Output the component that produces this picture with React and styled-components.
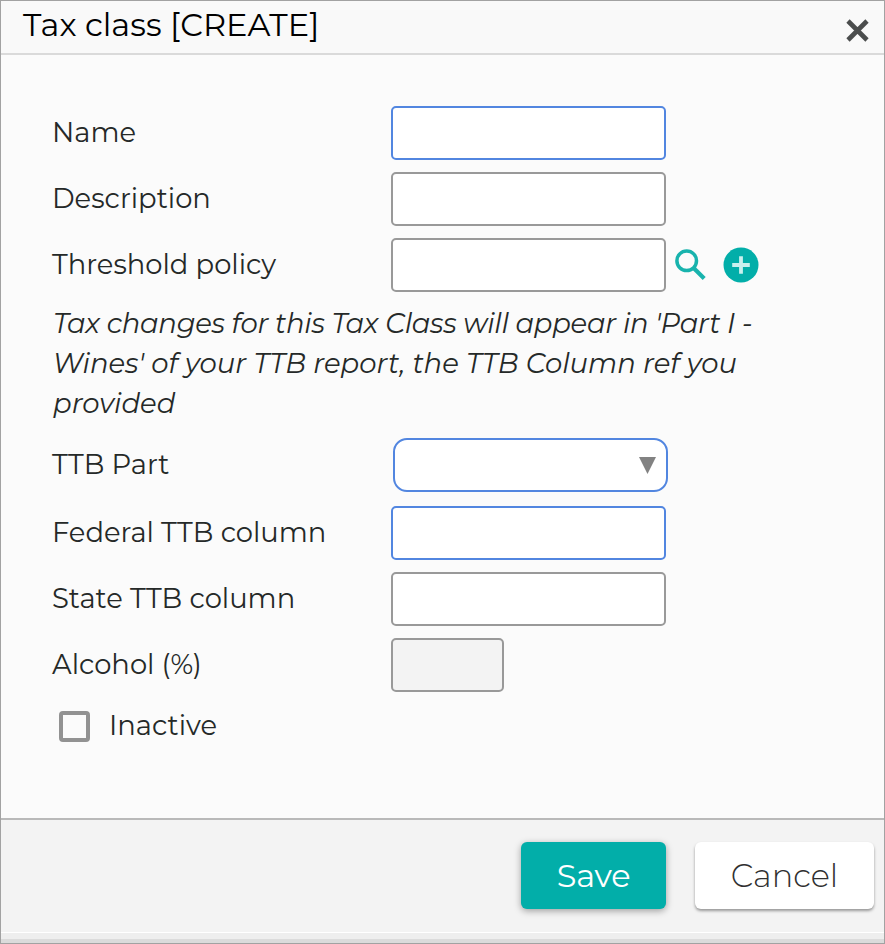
import React from "react";
import styled, { createGlobalStyle } from "styled-components";

const GlobalStyle = createGlobalStyle`
  *, *::before, *::after { box-sizing: border-box; }
  body { margin: 0; font-family: Montserrat, Inter, sans-serif; color: #252928; }
  button, input, select { font: inherit; }
`;

const Dialog = styled.main`
  width: 885px;
  height: 944px;
  display: flex;
  flex-direction: column;
  overflow: hidden;
  border: 1px solid #a2a2a2;
  background: #fbfbfb;
`;

const Header = styled.header`
  height: 54px;
  flex: none;
  display: flex;
  justify-content: space-between;
  padding: 0 14px 0 22px;
  background: #f9f9f9;
  border-bottom: 2px solid #dadada;
`;

const Title = styled.h1`
  margin: 0;
  font-size: 32px;
  font-weight: 400;
  line-height: 47px;
  letter-spacing: 0.03px;
  color: #000;
  white-space: nowrap;
`;

const CloseButton = styled.button`
  display: flex;
  width: 26px;
  height: 26px;
  margin-top: 16px;
  padding: 0;
  border: 0;
  background: none;
`;

const Form = styled.form`
  flex: 1;
  display: flex;
  flex-direction: column;
  gap: 12px;
  padding: 51px 0 0 51px;
`;

const Row = styled.div`
  height: 54px;
  flex: none;
  display: flex;
  align-items: center;
`;

const Label = styled.label`
  width: 339px;
  margin-top: -2px;
  font-size: 27.4px;
  line-height: 40px;
  white-space: nowrap;
`;

const Field = styled.input`
  width: ${(p) => (p.$short ? 113 : 275)}px;
  height: 54px;
  padding: 0 12px;
  border: 2px solid ${(p) => (p.$required ? "#5286e0" : "#999")};
  border-radius: 5px;
  background: ${(p) => (p.disabled ? "#f3f3f3" : "#fff")};
  outline: none;
`;

const SelectRow = styled(Row)`
  margin: 2px 0;
`;

const SelectBox = styled.div`
  width: 275px;
  height: 54px;
  display: flex;
  align-items: center;
  justify-content: flex-end;
  margin-left: 2px;
  padding-right: 10px;
  border: 2px solid #5286e0;
  border-radius: 14px;
  background: #fff;
`;

const IconButton = styled.button`
  display: flex;
  margin-left: ${(p) => p.$gap}px;
  padding: 0;
  border: 0;
  background: none;
`;

const Note = styled.p`
  margin: -1px 0 1px;
  padding-left: 1px;
  font-size: 27.5px;
  font-style: italic;
  line-height: 40px;
`;

const NoteLine = styled.span`
  display: block;
  white-space: nowrap;
  letter-spacing: ${(p) => p.$track || 0}px;
`;

const CheckRow = styled.div`
  display: flex;
  align-items: center;
  height: 44px;
  padding-left: 7px;
`;

const CheckLabel = styled(Label)`
  width: auto;
  margin: -3px 0 0 19px;
`;

const Checkbox = styled.span`
  width: 31px;
  height: 31px;
  border: 4px solid #929292;
  border-radius: 4px;
`;

const Footer = styled.footer`
  height: 115px;
  flex: none;
  display: flex;
  justify-content: flex-end;
  gap: 29px;
  padding: 22px 10px 0;
  border-top: 2px solid #b9b9b9;
  border-bottom: 1px solid #fff;
  background: #f3f3f3;
`;

const Button = styled.button`
  width: ${(p) => (p.$primary ? 145 : 179)}px;
  height: 67px;
  padding: 0;
  border: 0;
  border-radius: 6px;
  font-size: 32px;
  font-weight: ${(p) => (p.$primary ? 400 : 300)};
  line-height: 67px;
  letter-spacing: ${(p) => (p.$primary ? -0.2 : 0)}px;
  white-space: nowrap;
  color: ${(p) => (p.$primary ? "#fff" : "#303030")};
  background: ${(p) => (p.$primary ? "#02aea9" : "#fff")};
  box-shadow: ${(p) =>
    p.$primary
      ? "0 2px 7px rgba(0, 0, 0, 0.35)"
      : "0 2px 3px rgba(0, 0, 0, 0.38)"};
`;

const BottomEdge = styled.div`
  height: 10px;
  flex: none;
  border-bottom: 4px solid #dbdbdb;
  background: #eeeeee;
`;

export default function App() {
  return (
    <>
      <GlobalStyle />
      <Dialog>
        <Header>
          <Title>Tax class [CREATE]</Title>
          <CloseButton aria-label="Close">
            <svg width="26" height="26" viewBox="0 0 26 26">
              <path d="M4 4 23 23M23 4 4 23" stroke="#4b4d4d" strokeWidth="4.6" />
            </svg>
          </CloseButton>
        </Header>
        <Form>
          <Row>
            <Label>Name</Label>
            <Field $required />
          </Row>
          <Row>
            <Label>Description</Label>
            <Field />
          </Row>
          <Row>
            <Label>Threshold policy</Label>
            <Field />
            <IconButton type="button" $gap={8} aria-label="Search">
              <svg width="34" height="36" viewBox="0 0 34 36" fill="none" stroke="#18b3ad">
                <circle cx="12.7" cy="13.8" r="9.8" strokeWidth="3.5" />
                <path d="M19.6 21 30.2 31.4" strokeWidth="4.2" />
              </svg>
            </IconButton>
            <IconButton type="button" $gap={15} aria-label="Add">
              <svg width="36" height="36" viewBox="0 0 36 36">
                <circle cx="18" cy="18" r="17.5" fill="#02aea9" />
                <path d="M18 9.2v17.6M9.2 18h17.6" stroke="#c9f0ee" strokeWidth="3.8" />
              </svg>
            </IconButton>
          </Row>
          <Note>
            <NoteLine $track={-0.28}>Tax changes for this Tax Class will appear in 'Part I -</NoteLine>
            <NoteLine>Wines' of your TTB report, the TTB Column ref you</NoteLine>
            <NoteLine>provided</NoteLine>
          </Note>
          <SelectRow>
            <Label>TTB Part</Label>
            <SelectBox role="combobox" aria-label="TTB Part">
              <svg width="17" height="17" viewBox="0 0 17 17">
                <path d="M0 0h17L8.5 17z" fill="#828282" />
              </svg>
            </SelectBox>
          </SelectRow>
          <Row>
            <Label>Federal TTB column</Label>
            <Field $required />
          </Row>
          <Row>
            <Label>State TTB column</Label>
            <Field />
          </Row>
          <Row>
            <Label>Alcohol (%)</Label>
            <Field $short disabled />
          </Row>
          <CheckRow>
            <Checkbox role="checkbox" aria-checked="false" />
            <CheckLabel>Inactive</CheckLabel>
          </CheckRow>
        </Form>
        <Footer>
          <Button $primary>Save</Button>
          <Button>Cancel</Button>
        </Footer>
        <BottomEdge />
      </Dialog>
    </>
  );
}
